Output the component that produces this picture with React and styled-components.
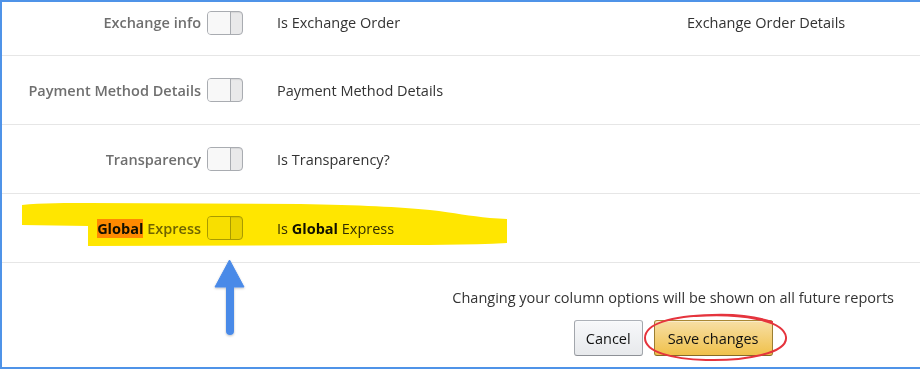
import React from "react";
import styled, { createGlobalStyle } from "styled-components";

const Global = createGlobalStyle`
  html, body { margin: 0; padding: 0; background: #fff; }
  body { font-family: "Open Sans", "Liberation Sans", sans-serif; }
`;

const rows = [
  { label: "Exchange info", value: "Is Exchange Order", extra: "Exchange Order Details", first: true },
  { label: "Payment Method Details", value: "Payment Method Details" },
  { label: "Transparency", value: "Is Transparency?" },
];

const App = () => {
  return (
    <Frame>
      <Global />
      <Table>
        {rows.map((r) => (
          <Row key={r.label} first={r.first}>
            <Label>{r.label}</Label>
            <Toggle><Knob /></Toggle>
            <Value>{r.value}</Value>
            <Extra>{r.extra}</Extra>
          </Row>
        ))}
        <Row>
          <Label>
            <Found>Global</Found> Express
          </Label>
          <Toggle><Knob /></Toggle>
          <Value>
            Is <b>Global</b> Express
          </Value>
          <Extra />
        </Row>
      </Table>
      <Footer>
        <Note>Changing your column options will be shown on all future reports</Note>
        <Buttons>
          <Button>Cancel</Button>
          <Button primary>Save changes</Button>
        </Buttons>
      </Footer>

      <Marker viewBox="0 0 920 369" width="920" height="369">
        <path
          d="M22 205 C40 203 70 203 88 203 L300 204 C360 205 400 207 430 210 C455 213 470 216 490 218 L507 219 L507 243 C470 245 420 245 380 245 L88 246 L88 226 L22 225 Z"
          fill="#ffe600"
        />
      </Marker>
      <Marks viewBox="0 0 920 369" width="920" height="369">
        <defs>
          <filter id="sh" x="-50%" y="-50%" width="200%" height="200%">
            <feDropShadow dx="0" dy="1" stdDeviation="1" floodColor="#000" floodOpacity="0.25" />
          </filter>
        </defs>
        <g filter="url(#sh)" fill="#4a8ae8" stroke="#4a8ae8">
          <path d="M229.5 260 L244 287 L215 287 Z" strokeLinejoin="round" strokeWidth="1" />
          <line x1="230" y1="285" x2="230" y2="331" strokeWidth="8" strokeLinecap="round" />
        </g>
        <path
          d="M696 316 C740 313 784 320 786 337 C788 354 742 361 706 360 C672 359 645 352 645 338 C645 324 670 316 712 315 C740 314 760 318 772 322"
          fill="none"
          stroke="#e5343d"
          strokeWidth="2"
          strokeLinecap="round"
        />
      </Marks>
    </Frame>
  );
};

export default App;

const Frame = styled.div`
  position: relative;
  width: 920px;
  height: 369px;
  box-sizing: border-box;
  border-top: 2px solid #4f93e8;
  border-left: 2px solid #4f93e8;
  border-bottom: 2px solid #4f93e8;
  overflow: hidden;
  font-size: 14.5px;
`;

const Table = styled.div`
  display: flex;
  flex-direction: column;
`;

const Row = styled.div`
  display: flex;
  align-items: center;
  height: ${({ first }) => (first ? "54px" : "69px")};
  padding-bottom: ${({ first }) => (first ? "12px" : "0")};
  box-sizing: border-box;
  border-bottom: 1px solid #e6e6e6;
`;

const Label = styled.div`
  width: 199px;
  padding-right: 6px;
  box-sizing: content-box;
  text-align: right;
  font-weight: 600;
  color: #6f6f6f;
  white-space: nowrap;
`;

const Found = styled.span`
  background: #ff9900;
  color: #111;
  font-weight: 700;
`;

const Toggle = styled.div`
  width: 36px;
  height: 24px;
  box-sizing: border-box;
  border: 1px solid #a9acb1;
  border-radius: 4px;
  background: #e9e9ea;
  box-shadow: inset 0 1px 1px rgba(0, 0, 0, 0.08);
  display: flex;
`;

const Knob = styled.div`
  width: 23px;
  height: 100%;
  box-sizing: border-box;
  border-right: 1px solid #a9acb1;
  border-radius: 3px 0 0 3px;
  background: #f8f8f8;
`;

const Value = styled.div`
  width: 410px;
  padding-left: 34px;
  color: #333;
  white-space: nowrap;

  b {
    color: #111;
    font-weight: 700;
  }
`;

const Extra = styled.div`
  color: #333;
  white-space: nowrap;
`;

const Footer = styled.div`
  display: flex;
  flex-direction: column;
  align-items: center;
  width: fit-content;
  margin-left: auto;
  margin-right: 26px;
  padding-top: 25px;
  gap: 13px;
`;

const Note = styled.div`
  color: #333;
  white-space: nowrap;
`;

const Buttons = styled.div`
  display: flex;
  gap: 11px;
`;

const Button = styled.button`
  height: 36px;
  padding: 0 ${({ primary }) => (primary ? "13px" : "11px")};
  font-family: inherit;
  font-size: 14.5px;
  color: #111;
  border-radius: 3px;
  border-width: 1px;
  border-style: solid;
  border-color: ${({ primary }) => (primary ? "#a88734 #9c7e31 #846a29" : "#adb1b8 #a2a6ac #8d9096")};
  background: ${({ primary }) =>
    primary
      ? "linear-gradient(to bottom, #f7dfa5, #f0c14b)"
      : "linear-gradient(to bottom, #f7f8fa, #e7e9ec)"};
  box-shadow: 0 1px 0 rgba(255, 255, 255, 0.4) inset;
`;

const Marker = styled.svg`
  position: absolute;
  left: -2px;
  top: -2px;
  pointer-events: none;
  mix-blend-mode: multiply;
`;

const Marks = styled.svg`
  position: absolute;
  left: -2px;
  top: -2px;
  pointer-events: none;
`;
